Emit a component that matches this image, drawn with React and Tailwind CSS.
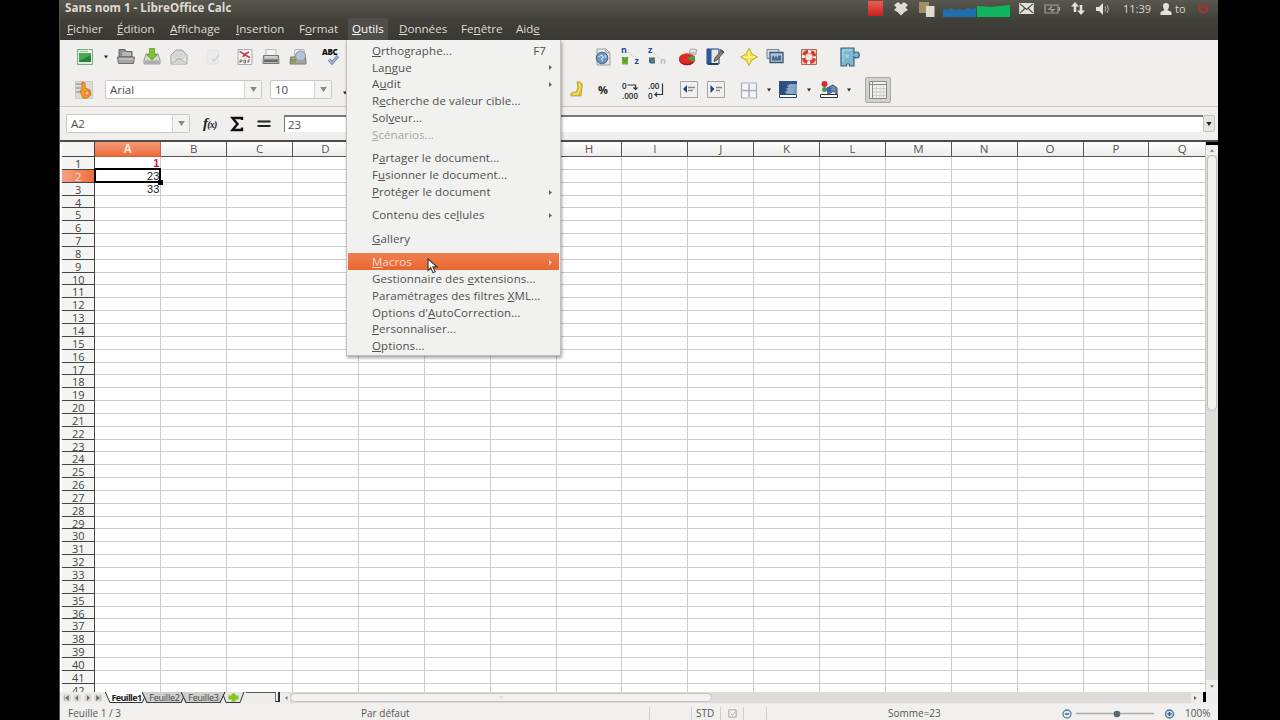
import React from "react";

const columns = "ABCDEFGHIJKLMNOPQ".split("");
const rows = Array.from({ length: 42 }, (_, i) => i + 1);
const cells = { A1: "1", A2: "23", A3: "33" };

// "_" marks the mnemonic letter that follows it
const menuBar = [
  { label: "_Fichier", width: "w-[50px]" },
  { label: "_Édition", width: "w-[53px]" },
  { label: "_Affichage", width: "w-[66px]" },
  { label: "_Insertion", width: "w-[63px]" },
  { label: "F_ormat", width: "w-[53px]" },
  { label: "_Outils", width: "w-[47px]", open: true },
  { label: "_Données", width: "w-[62px]" },
  { label: "Fe_nêtre", width: "w-[55px]" },
  { label: "Aid_e", width: "w-[40px]" },
];

const toolsMenu = [
  [
    { label: "_Orthographe...", shortcut: "F7" },
    { label: "La_ngue", sub: true },
    { label: "A_udit", sub: true },
    { label: "R_echerche de valeur cible..." },
    { label: "Sol_veur..." },
    { label: "_Scénarios...", disabled: true },
  ],
  [
    { label: "P_artager le document..." },
    { label: "F_usionner le document..." },
    { label: "_Protéger le document", sub: true },
  ],
  [{ label: "Contenu des ce_llules", sub: true }],
  [{ label: "_Gallery" }],
  [
    { label: "_Macros", sub: true, active: true },
    { label: "Gestionnaire des _extensions..." },
    { label: "Paramétrages des filtres _XML..." },
    { label: "Options d'_AutoCorrection..." },
    { label: "_Personnaliser..." },
    { label: "_Options..." },
  ],
];

const Mnemonic = ({ text }) => {
  const i = text.indexOf("_");
  if (i < 0) return <>{text}</>;
  return (
    <>
      {text.slice(0, i)}
      <span className="underline underline-offset-1">{text[i + 1]}</span>
      {text.slice(i + 2)}
    </>
  );
};

const Icon = ({ className = "", children }) => (
  <svg viewBox="0 0 20 20" className={`w-5 h-5 shrink-0 ${className}`} fill="none">
    {children}
  </svg>
);

const Dot = ({ className = "" }) => (
  <svg viewBox="0 0 8 8" className={`w-2 h-2 shrink-0 ${className}`}>
    <path d="M2 2.500h4L4 5.500z" fill="#222" />
  </svg>
);

const Combo = ({ value, className = "" }) => (
  <div className={`flex h-[19px] shrink-0 rounded-xs border border-[#c9c8c5] bg-white ${className}`}>
    <span className="flex-1 pl-1 leading-[18px]">{value}</span>
    <span className="flex w-[17px] items-center justify-center border-l border-[#d6d5d2] bg-[#f3f3f1]">
      <svg viewBox="0 0 8 6" className="w-[7px] h-[5px]">
        <path d="M0 0h8L4 6z" fill="#888" />
      </svg>
    </span>
  </div>
);

const StandardBar = () => (
  <div className="flex h-[33px] items-center">
    {/* new */}
    <Icon className="ml-[15px]">
      <path d="M2.500 2.500h15v15h-15z" fill="#dcefd9" stroke="#7fa97f" />
      <path d="M4 6h12v9H4z" fill="#4aa957" />
      <path d="M4 14 16 8v7H4z" fill="#278138" />
      <path d="M5 4.500h8" stroke="#9cc49a" />
      <path d="M13 2l4 4h-4z" fill="#fff" />
    </Icon>
    <Dot className="ml-[7px]" />
    {/* open */}
    <Icon className="ml-1.5">
      <path d="M3 10V2.500h6l1 2h6V10z" fill="#8f8f8f" stroke="#666" />
      <path d="M6 6h9M6 8h9" stroke="#ddd" />
      <path d="M1.500 10h17l-1 6.500h-15z" fill="#a5a5a5" stroke="#6d6d6d" />
      <path d="M3 12h14" stroke="#d5d5d5" />
    </Icon>
    {/* save */}
    <Icon className="ml-1.5">
      <path d="M4 7h12l2 6v4H2v-4z" fill="#d4d6d2" stroke="#9a9c98" />
      <path d="M3 13.500h14v3H3z" fill="#a9aca7" />
      <path d="M7.500 1.500h5v6h3L10 13 4.500 7.500h3z" fill="#7dc52a" stroke="#559a18" strokeWidth=".7" />
    </Icon>
    {/* mail */}
    <Icon className="ml-[7px]">
      <path d="M2 8l5-5h6l5 5v9H2z" fill="#e4e4e2" stroke="#a0a09e" />
      <path d="M5 5h10v6H5z" fill="#fafafa" stroke="#aaa" strokeWidth=".7" />
      <path d="M6 7h8M6 9h8" stroke="#b0b0b0" />
      <path d="M2 17l6-5h4l6 5" fill="#d5d5d3" stroke="#a0a09e" strokeWidth=".7" />
    </Icon>
    {/* edit */}
    <Icon className="ml-3.5">
      <path d="M4 3h11v14H4z" fill="#ececea" stroke="#e2e2e0" />
      <path d="M9 12l2 2 5-6" stroke="#cfd2dc" strokeWidth="1.500" />
    </Icon>
    {/* pdf */}
    <Icon className="ml-3">
      <path d="M3 2.500h14v15H3z" fill="#f8f4f2" stroke="#aaa" />
      <path d="M4.500 4.500c3 1 7 5 10.500 6M8 10c1-2 3-4 6-5" stroke="#d33549" strokeWidth="1.600" />
      <path d="M5 16v-3h2v1.500H5M9 13v3h1.500v-3zM13 16v-3h2M13 14.500h1.500" stroke="#777" />
    </Icon>
    {/* print */}
    <Icon className="ml-1.5">
      <path d="M5 2.500h10V9H5z" fill="#f4f4f4" stroke="#bbb" />
      <path d="M2.500 8.500h15l.5 8H2z" fill="#b5b5b3" stroke="#777" />
      <path d="M3 12.500h14v2.500H3z" fill="#6a6a68" />
      <path d="M4 10h12" stroke="#eee" />
    </Icon>
    {/* print preview */}
    <Icon className="ml-[7px]">
      <path d="M7 2.500h9l1 8H6z" fill="#f3f3f3" stroke="#b5b5b5" />
      <path d="M2.500 10h15l.5 7H2z" fill="#a7a8a4" stroke="#777" />
      <circle cx="12.500" cy="9" r="5" fill="#b5c4d8" stroke="#8791a0" />
      <path d="M3 12h5v3.500H3z" fill="#8a9a3b" />
    </Icon>
    {/* spelling */}
    <div className="relative ml-3 h-5 w-5 shrink-0">
      <span className="absolute left-0.5 top-0 text-[8px] leading-[9px] font-extrabold tracking-tighter text-[#111]">ABC</span>
      <Icon>
        <path d="M9 12.500l3 3.500 6-7" stroke="#6f7fb4" strokeWidth="3" />
        <path d="M9 12.500l3 3.500 6-7" stroke="#a9b5dc" strokeWidth="1.200" />
      </Icon>
    </div>
    {/* find */}
    <Icon className="ml-[253px]">
      <path d="M4 2h9l4 4v12H4z" fill="#e7e7e5" stroke="#9b9b9b" />
      <path d="M13 2v4h4" stroke="#9b9b9b" />
      <circle cx="9" cy="11" r="5.800" fill="#6f93bf" stroke="#436892" />
      <path d="M5.500 10l3-2 2 2-2 2 1 2M12 8l1 3" stroke="#c5d8ea" strokeWidth="1.300" />
    </Icon>
    {/* sort ascending */}
    <div className="relative ml-1.5 h-5 w-5 shrink-0 text-[9px] leading-[9px] font-bold">
      <span className="absolute left-0.5 -top-0.5 text-[#27489b]">n</span>
      <span className="absolute right-0 bottom-0.5 text-[#234a88]">z</span>
      <Icon>
        <path d="M3 10h6v7.500H3z" fill="#6fae35" />
        <path d="M3 10l3 5 3-5" stroke="#4d8f2b" />
        <path d="M9 5l6 5" stroke="#a6c294" strokeDasharray="1 1" />
      </Icon>
    </div>
    {/* sort descending */}
    <div className="relative ml-[7px] h-5 w-5 shrink-0 text-[9px] leading-[9px] font-bold">
      <span className="absolute left-0.5 -top-0.5 text-[#27489b]">z</span>
      <span className="absolute right-0 bottom-0.5 text-[#b7bcc4]">n</span>
      <Icon>
        <path d="M3 10.500h6v6H4.500L3 15z" fill="#3f6583" />
        <path d="M4 11l3 4 2-4" stroke="#7da35a" />
        <path d="M8 6l6 6" stroke="#b8b9bb" strokeDasharray="1 1" />
      </Icon>
    </div>
    {/* chart */}
    <Icon className="ml-3">
      <ellipse cx="9" cy="12.800" rx="8" ry="5.500" fill="#a31519" />
      <ellipse cx="9" cy="11.500" rx="8" ry="5.200" fill="#de2b27" />
      <path d="M9 11l7.500-2.500c1 2 .5 5-1.500 6.500z" fill="#4c9d38" />
      <path d="M11 6.500 12.500 2l6 .5-.5 5z" fill="#e8e8e8" stroke="#a8a8a8" />
      <path d="M12.500 5.500h5" stroke="#b5b5b5" />
    </Icon>
    {/* draw */}
    <Icon className="ml-[7px]">
      <path d="M2 2h12v15H2z" fill="#dfe8f3" stroke="#1f3e6f" />
      <path d="M2 2h4.500v15H2z" fill="#2d5797" />
      <path d="M3 17h10" stroke="#2b3c55" strokeWidth="2" />
      <path d="M17 3l2 2-7 8-3 1.500 1-3.500z" fill="#a07c5c" stroke="#5d5048" />
      <path d="M15 2.500l3.500 3.500" stroke="#666" strokeWidth="2" />
    </Icon>
    {/* navigator */}
    <Icon className="ml-3.5">
      <path d="M10 1.500l3 5.500 5.500 3-5.500 3-3 5.500L7 13l-5.500-3L7 7z" fill="#efdc3a" stroke="#bfae30" />
      <path d="M10 4v12M4 10h12" stroke="#fff79a" strokeWidth="1.300" />
    </Icon>
    {/* gallery */}
    <Icon className="ml-1.5">
      <path d="M2 2.500h12v9H2z" fill="#d8dde2" stroke="#6d8194" />
      <path d="M5 5.500h13v10H5z" fill="#a9c4dd" stroke="#3f566c" strokeWidth="1.300" />
      <path d="M7 13.500v-4l2-1v3l2-3 2 3v-3h3v5z" fill="#416c91" />
    </Icon>
    {/* help */}
    <Icon className="ml-3.5">
      <path d="M2.500 2.500h15v15h-15z" fill="#ecc8b6" stroke="#a86e58" />
      <circle cx="10" cy="10" r="5.500" stroke="#d63b32" strokeWidth="3.500" />
      <circle cx="10" cy="10" r="5.500" stroke="#fff" strokeWidth="3" strokeDasharray="3 5.640" strokeDashoffset="1.500" />
      <circle cx="10" cy="10" r="3" fill="#f3e4dd" />
    </Icon>
    {/* extension */}
    <Icon className="ml-[20px] w-[22px]">
      <path
        d="M1 1h13v5c1-1 2-1 3-1 3 0 3 6 0 6-1 0-2 0-3-1v9H9.500c1-3-4-3-3 0H1z"
        fill="#7cb6cf"
        stroke="#35647f"
        strokeWidth="1.200"
      />
      <path d="M3 3h9M3 3v12" stroke="#b9deeb" />
      <circle cx="7" cy="9" r="2" fill="#a1cfdf" />
    </Icon>
  </div>
);

const FormattingBar = () => (
  <div className="flex h-[33px] items-center">
    {/* styles */}
    <Icon className="ml-3.5">
      <path d="M1.500 1.500h17v17h-17z" fill="#dcdcda" stroke="#c9c9c7" />
      <path d="M2 4h7M2 8h5M2 12h6" stroke="#b0b0ae" strokeWidth="2" />
      <path d="M8 2l3 1v5l5 2 1 5-4 3H9L6 11l2-1z" fill="#f2a41f" stroke="#d9701b" />
      <path d="M11 11h4v4h-4z" fill="#f6c7a0" stroke="#e9642c" />
    </Icon>
    <Combo value="Arial" className="ml-[11px] w-[157px]" />
    <Combo value="10" className="ml-2 w-[62px]" />
    <Dot className="ml-[9px] mt-1.5" />
    {/* currency */}
    <Icon className="ml-[219px]">
      <path d="M9 2c4-1 6 2 5 5l-1 9H3c-1-3 1-4 5-4 2-3 2-6 1-10z" fill="#dcc13a" stroke="#b39c2c" strokeWidth=".8" />
      <path d="M11.500 4c1 3 0 7-2 10H5" stroke="#fbf08e" />
    </Icon>
    {/* percent */}
    <div className="ml-[5px] w-5 shrink-0 text-center text-[11px] leading-5 font-bold text-[#222]">%</div>
    {/* add decimal */}
    <div className="relative ml-[7px] h-5 w-5 shrink-0 text-[8px] leading-[9px] font-semibold text-[#222]">
      <span className="absolute top-px left-0.5">0</span>
      <span className="absolute right-0.5 bottom-0">.000</span>
      <Icon>
        <path d="M7.500 5h8v4M13.500 7.500l2 2 2-2" stroke="#333" strokeWidth="1.200" />
      </Icon>
    </div>
    {/* remove decimal */}
    <div className="relative ml-1.5 h-5 w-5 shrink-0 text-[8px] leading-[9px] font-semibold text-[#222]">
      <span className="absolute top-px left-0.5">.00</span>
      <span className="absolute bottom-0 left-0.5">0</span>
      <Icon>
        <path d="M16.500 3.500V14.500H9M11 12.500l-2 2 2 2" stroke="#333" strokeWidth="1.200" />
      </Icon>
    </div>
    {/* decrease indent */}
    <Icon className="ml-[13px]">
      <path d="M1.500 1.500h17v16h-17z" fill="#f0f0f0" stroke="#a5a5a5" />
      <path d="M4 9l4-4v8z" fill="#283f7a" />
      <path d="M9 7.500h7M9 10.500h5" stroke="#888" strokeWidth="1.300" />
    </Icon>
    {/* increase indent */}
    <Icon className="ml-[7px]">
      <path d="M1.500 1.500h17v16h-17z" fill="#f0f0f0" stroke="#a5a5a5" />
      <path d="M8.500 9l-4-4v8z" fill="#283f7a" />
      <path d="M10 7.500h6M10 10.500h4" stroke="#888" strokeWidth="1.300" />
    </Icon>
    {/* borders */}
    <Icon className="ml-[13px]">
      <path d="M2.500 3h15v15h-15z" fill="#f3f4f6" stroke="#a9adb4" strokeWidth="1.200" />
      <path d="M10 4v13M3 10.500h14" stroke="#a9adb4" strokeWidth="1.500" />
    </Icon>
    <Dot className="ml-1.5" />
    {/* background */}
    <Icon className="ml-[5px]">
      <path d="M1 1h18v13H1z" fill="#7f9dbf" />
      <path d="M1 1h11L8 14H1z" fill="#2c4f80" />
      <path d="M1 1h18v3H1z" fill="#2f5288" />
      <path d="M9 6h7M8 9h7M7 12h8" stroke="#a5bad0" />
      <path d="M1.500 14.500h17v3h-17z" fill="#fff" stroke="#254b72" />
    </Icon>
    <Dot className="ml-[7px]" />
    {/* border colour */}
    <Icon className="ml-1.5">
      <path d="M8 8l6-3 4 3v7l-3-4-6 3z" fill="#7289a8" stroke="#344a68" />
      <circle cx="5.500" cy="4" r="3" fill="#db2634" />
      <circle cx="5.500" cy="9.500" r="2.500" fill="#3fa23e" />
      <circle cx="10" cy="9.500" r="2.500" fill="#3b60bd" />
      <path d="M1.500 14.500h17v3h-17z" fill="#fff" stroke="#333" />
    </Icon>
    <Dot className="ml-1.5" />
    {/* grid lines toggle */}
    <div className="ml-3 flex h-[26px] w-[26px] shrink-0 items-center justify-center rounded-xs border border-[#a9a8a5] bg-[#d2d1ce]">
      <Icon>
        <path d="M1.500 1.500h17v17h-17z" fill="#f0f0ee" stroke="#888" />
        <path d="M2 4.500h16M4.500 2v16" stroke="#8a8a8a" />
        <path d="M8.500 5v13M12 5v13M15.500 5v13M5 8.500h13M5 12h13M5 15.500h13" stroke="#c6c6c4" strokeWidth=".8" />
      </Icon>
    </div>
  </div>
);

const FormulaBar = () => (
  <div className="flex h-[34px] items-center border-t border-[#c8c7c4]">
    <Combo value="A2" className="ml-1.5 w-[124px]" />
    <span className="ml-[13px] w-[20px] font-['Liberation_Serif'] text-[15px] font-bold italic leading-5 tracking-tighter whitespace-nowrap text-[#222]">
      f<span className="text-[10px]">(x)</span>
    </span>
    <Icon className="ml-1">
      <path d="M15 6V4H5.500l5 6-5 6H15v-2.500" stroke="#111" strokeWidth="2.400" />
    </Icon>
    <Icon className="ml-[7px]">
      <path d="M3.500 7.500h13M3.500 12h13" stroke="#222" strokeWidth="2" />
    </Icon>
    <div className="ml-[10px] h-[17px] flex-1 border-t-2 border-l border-[#777] bg-white pl-[3px] leading-[15px]">23</div>
    <div className="mr-[3px] flex h-[17px] w-3 items-center justify-center rounded-xs border border-[#c5c4c1] bg-[#e6e5e3]">
      <svg viewBox="0 0 8 6" className="w-1.5 h-1">
        <path d="M0 0h8L4 6z" fill="#222" />
      </svg>
    </div>
  </div>
);

const Sheet = () => (
  <div className="flex h-[552px] overflow-hidden border-t-2 border-[#4d4d4d] bg-white">
    <div className="ml-[2px] w-[1144px] overflow-hidden border-r border-[#c6c6c6]">
      <div className="flex h-[15px] text-[11.500px]">
        <div className="w-[33.400px] shrink-0 border-r border-b border-[#444] bg-[#f4f4f2]"></div>
        {columns.map((col) => (
          <div
            key={col}
            className={`w-[65.880px] shrink-0 border-r border-b text-center leading-[13px] ${
              col === "A"
                ? "border-[#b9664a] bg-linear-to-b from-[#f39a76] to-[#ee6b38] font-bold text-[#ffe3d6]"
                : "border-[#555] bg-linear-to-b from-white to-[#ececea] font-medium text-[#555]"
            } ${col === "Q" ? "border-r-0" : ""}`}
          >
            {col}
          </div>
        ))}
      </div>
      {rows.map((row) => (
        <div key={row} className="flex h-[12.857px]">
          <div
            className={`w-[33.400px] shrink-0 border-r border-b border-[#444] text-center text-[11px] leading-[14px] font-medium ${
              row === 2
                ? "bg-linear-to-r from-[#f4a182] to-[#ee6b38] font-bold text-[#ffe3d6]"
                : "bg-[#f4f4f2] text-[#444]"
            }`}
          >
            {row}
          </div>
          {columns.map((col) => {
            const value = cells[col + row];
            return (
              <div
                key={col}
                className={`relative w-[65.880px] shrink-0 border-r border-b border-[#cdcdcd] pr-px text-right font-['Liberation_Sans'] text-[11px] leading-[12px] ${
                  row === 1 && value ? "font-bold text-[#cf1245]" : "text-[#222]"
                }`}
              >
                {value}
                {col + row === "A2" && (
                  <>
                    <div className="absolute -inset-x-px -top-0.5 -bottom-px border-2 border-black"></div>
                    <div className="absolute -right-[3px] -bottom-[3px] z-1 size-[5px] bg-black"></div>
                  </>
                )}
              </div>
            );
          })}
        </div>
      ))}
    </div>
    {/* vertical scrollbar */}
    <div className="flex flex-1 flex-col items-center bg-[#dfdedb]">
      <div className="h-[3px] w-full bg-black"></div>
      <div className="flex h-2.5 w-full items-center justify-center bg-[#f0efed]">
        <svg viewBox="0 0 6 4" className="w-1 h-[3px]">
          <path d="M0 4h6L3 0z" fill="#777" />
        </svg>
      </div>
      <div className="h-[256px] w-[10px] rounded-full border border-[#bdbcb9] bg-[#f3f2f0]"></div>
      <div className="flex-1"></div>
      <div className="flex h-3 w-full items-center justify-center bg-[#f0efed]">
        <svg viewBox="0 0 6 4" className="w-1 h-[3px]">
          <path d="M0 0h6L3 4z" fill="#777" />
        </svg>
      </div>
    </div>
  </div>
);

const SheetTab = ({ name, active, width }) => (
  <div className={`relative h-[11px] shrink-0 ${width}`}>
    <svg viewBox="0 0 40 11" preserveAspectRatio="none" className="absolute inset-0 h-full w-full overflow-visible">
      <path
        d="M-4 0L1 10.500H36L41 0"
        fill={active ? "#fff" : "#cfcfcd"}
        stroke="#333"
        vectorEffect="non-scaling-stroke"
      />
    </svg>
    <span
      className={`relative -ml-0.5 block text-center text-[9px] leading-[11px] whitespace-nowrap ${
        active ? "font-bold tracking-[-0.6px] text-[#222]" : "tracking-tight text-[#444] underline"
      }`}
    >
      {name}
    </span>
  </div>
);

const TabBar = () => (
  <div className="flex h-3 items-start bg-[#eeedeb]">
    <div className="flex w-[49px] shrink-0 justify-around pt-0.5 pr-1.5 pl-0.5">
      {["M1 1v6M6 1L2 4l4 3z", "M5 1L2 4l3 3z", "M3 1l3 3-3 3z", "M7 1v6M2 1l4 3-4 3z"].map((d) => (
        <svg key={d} viewBox="-1 -1 10 10" className="w-2 h-2 rounded-xs bg-[#dddcda]">
          <path d={d} fill="#666" stroke="#666" strokeWidth=".5" />
        </svg>
      ))}
    </div>
    <SheetTab name="Feuille1" active width="w-[37px]" />
    <SheetTab name="Feuille2" width="w-[39px]" />
    <SheetTab name="Feuille3" width="w-[39px]" />
    <svg viewBox="0 0 22 11" className="h-[11px] w-[22px] shrink-0 overflow-visible">
      <path d="M-2 0L2 10.500h14L20 0" fill="#e6e5e3" stroke="#333" />
      <path d="M7.500 1.500h4v2h3v4h-3v2h-4v-2h-3v-4h3z" fill="#86c41f" />
    </svg>
    <div className="h-[11px] w-[29px] shrink-0 border-t border-[#555]"></div>
    <div className="h-[10px] w-[5px] shrink-0 border-r-2 border-b border-l border-[#333] border-l-[#777]"></div>
    {/* horizontal scrollbar */}
    <div className="ml-[2px] flex h-[11px] flex-1 items-center bg-[#dddcd9]">
      <svg viewBox="0 0 8 10" className="w-2 h-2.5 bg-[#eeedeb]">
        <path d="M5.500 3v4L3 5z" fill="#777" />
      </svg>
      <div className="flex h-[9px] w-[422px] items-center justify-center rounded-full border border-[#c2c1be] bg-[#f3f2f0] text-[6px] text-[#aaa]">
        :::
      </div>
      <div className="flex-1"></div>
      <svg viewBox="0 0 8 10" className="w-2 h-2.5 bg-[#eeedeb]">
        <path d="M3 3v4l2.500-2z" fill="#555" />
      </svg>
    </div>
    <div className="ml-1 mr-3 h-[10px] w-[3px] bg-black"></div>
  </div>
);

const StatusBar = () => (
  <div className="flex h-4 items-center overflow-hidden bg-[#f1f0ee] pt-[3px] text-[10px] font-medium text-[#555]">
    <span className="w-[293px] pl-2 leading-[13px]">Feuille 1 / 3</span>
    <span className="w-[296px] pl-2 leading-[13px]">Par défaut</span>
    <span className="h-[13px] w-[42px] border-l border-[#d0cfcc]"></span>
    <span className="h-[13px] w-[30px] border-x border-[#d0cfcc] pl-1 leading-[13px]">STD</span>
    <span className="flex h-[13px] w-[23px] items-center justify-center border-r border-[#d0cfcc]">
      <svg viewBox="0 0 10 10" className="w-[9px] h-[9px]">
        <path d="M1 1h8v8H1z" fill="#f7f7f5" stroke="#999" />
        <path d="M3 5l2 2 3-4" fill="none" stroke="#999" />
      </svg>
    </span>
    <span className="h-[13px] w-[23px] border-r border-[#d0cfcc]"></span>
    <span className="w-[292px] pl-[121px] leading-[13px]">Somme=23</span>
    <svg viewBox="0 0 118 12" className="h-3 w-[118px] shrink-0" fill="none">
      <circle cx="8" cy="6" r="4" fill="#dfe8ee" stroke="#5f7f95" strokeWidth="1.300" />
      <path d="M6 6h4" stroke="#345" strokeWidth="1.200" />
      <path d="M17 5.500h78" stroke="#aaa" strokeWidth="1.500" />
      <circle cx="58" cy="6" r="3.300" fill="#5a6a6c" />
      <circle cx="110.500" cy="6" r="4" fill="#c6dbe8" stroke="#4c7896" strokeWidth="1.300" />
      <path d="M108.500 6h4M110.500 4v4" stroke="#345" strokeWidth="1.200" />
    </svg>
    <span className="ml-2 leading-[13px]">100%</span>
  </div>
);

const Tray = () => (
  <div className="absolute top-0 right-0 flex h-[17px] w-[352px] items-center text-[11px] text-[#d9d6cc]">
    <div className="ml-0.5 size-[15px] bg-linear-to-b from-[#ec5a50] to-[#c9201d]"></div>
    {/* dropbox */}
    <svg viewBox="0 0 14 14" className="ml-[11px] w-3.5 h-3.5" fill="#dfdbd2">
      <path d="M4 0l3 2.500L10 0l4 3-2.500 2.500L14 8l-3.500 2L7 13.500 3.500 10 0 8l2.500-2.500L0 3z" />
    </svg>
    {/* clipboard */}
    <svg viewBox="0 0 16 16" className="ml-[11px] w-4 h-4">
      <path d="M0 1h10v11H0z" fill="#a18c66" />
      <path d="M7 5h8.500v11H7z" fill="#dedbd0" />
    </svg>
    {/* load graphs */}
    <svg viewBox="0 0 67 16" className="ml-2 w-[67px] h-4">
      <path d="M0 8l4 1 4-2 4 2 5-1 4 1 4-2 4 1 4-1v9H0z" fill="#1f6ead" />
      <path d="M34 5l14 1 19-2v12H34z" fill="#0fb460" />
    </svg>
    {/* envelope */}
    <svg viewBox="0 0 16 12" className="ml-[9px] h-[11px] w-[15px]">
      <path d="M0 0h16v12H0z" fill="#e4e1d8" />
      <path d="M1 1l7 6 7-6M1 11l5-5M15 11l-5-5" fill="none" stroke="#4a4943" strokeWidth="1.200" />
    </svg>
    {/* battery */}
    <svg viewBox="0 0 17 10" className="ml-[10px] h-[10px] w-[17px]" fill="none" stroke="#a5a298" strokeWidth="1.200">
      <path d="M1 1h13v8H1zM15.500 3v4" />
      <path d="M8 2L5 5.500h5L7 8" />
    </svg>
    {/* network */}
    <svg viewBox="0 0 14 13" className="ml-[10px] h-[13px] w-3.5" fill="#e4e1d8">
      <path d="M4 0l4 4.500H5.300V10H2.700V4.500H0zM10 13L6.200 8.500h2.500V3h2.600v5.500H14z" />
    </svg>
    {/* volume */}
    <svg viewBox="0 0 15 12" className="ml-[11px] h-3 w-[15px]">
      <path d="M0 4h3l4-4v12L3 8H0z" fill="#e4e1d8" />
      <path d="M9 3.500q1.500 2.500 0 5M11 2q3 4 0 8" fill="none" stroke="#b5b2a8" />
    </svg>
    <span className="ml-[12px] w-[29px] leading-4 font-medium">11:39</span>
    <svg viewBox="0 0 12 12" className="ml-2 h-3 w-3" fill="#e4e1d8">
      <path d="M6 0c2 0 3 1 3 3S8 6 7.500 7l4 2v3H.5V9l4-2C4 6 3 5 3 3s1-3 3-3z" />
    </svg>
    <span className="ml-[3px] leading-4 font-medium">to</span>
    <svg viewBox="0 0 12 12" className="ml-3 h-[11px] w-[11px]" fill="none" stroke="#b92d2c" strokeWidth="2">
      <path d="M3 2.500a4.500 4.500 0 1 0 6 0M6 .5v5" />
    </svg>
  </div>
);

const ToolsMenu = () => (
  <div className="absolute top-10 left-[286px] z-10 h-[316px] w-[215px] border border-t-0 border-[#c2c1be] bg-[#f1f1ef] pt-0.5 font-medium tracking-[0.1px] shadow-[1px_2px_3px_rgba(0,0,0,0.35)]">
    {toolsMenu.map((group, i) => (
      <div key={i} className={i > 0 ? "mt-[6.500px]" : ""}>
        {group.map((item) => (
          <div
            key={item.label}
            className={`mx-px flex h-[16.850px] items-center pr-[5px] pl-6 ${
              item.active
                ? "bg-linear-to-b from-[#f07f50] to-[#e9662f] text-[#fbd9c9]"
                : item.disabled
                ? "text-[#a5a5a3]"
                : "text-[#505050]"
            }`}
          >
            <span className="flex-1 whitespace-nowrap">
              <Mnemonic text={item.label} />
            </span>
            {item.shortcut && <span className="mr-2">{item.shortcut}</span>}
            {item.sub && (
              <svg viewBox="0 0 3 5" className="mt-px mr-0.5 w-[3px] h-[5px]">
                <path d="M0 0l3 2.500L0 5z" fill={item.active ? "#fbd9c9" : "#666"} />
              </svg>
            )}
          </div>
        ))}
      </div>
    ))}
    {/* mouse pointer */}
    <svg viewBox="0 0 12 18" className="absolute top-[218px] left-[80px] w-[11px] h-4">
      <path d="M1 1v13l3-3 2.500 5.500 2.500-1L6.500 10H11z" fill="#fff" stroke="#333" strokeWidth="1.200" />
    </svg>
  </div>
);

const App = () => {
  return (
    <div className="h-[720px] w-[1280px] overflow-hidden bg-black pr-[62px] pl-[59px]">
      <div className="relative h-full overflow-hidden border-l border-[#55544f] bg-[#f0efed] font-['Open_Sans','Noto_Sans',sans-serif] text-[11.500px] text-[#4c4c4c]">
        <header className="relative h-10 bg-linear-to-b from-[#59584f] via-[#403f39] via-50% to-[#3a3934] text-[#dfdbd2]">
          <h1 className="pl-[5px] text-[11.600px] leading-4 font-bold">Sans nom 1 - LibreOffice Calc</h1>
          <Tray />
          <nav className="flex h-6 pt-0.5 pl-[7px] text-[11.600px] leading-[22px] font-medium">
            {menuBar.map((item) => (
              <span key={item.label} className={`shrink-0 ${item.width}`}>
                <span className={item.open ? "-ml-1 block w-[40px] rounded-t-xs bg-[#4f4e48] pl-1 text-white" : ""}>
                  <Mnemonic text={item.label} />
                </span>
              </span>
            ))}
          </nav>
        </header>
        <StandardBar />
        <FormattingBar />
        <FormulaBar />
        <Sheet />
        <TabBar />
        <StatusBar />
        <ToolsMenu />
      </div>
    </div>
  );
};

export default App;
